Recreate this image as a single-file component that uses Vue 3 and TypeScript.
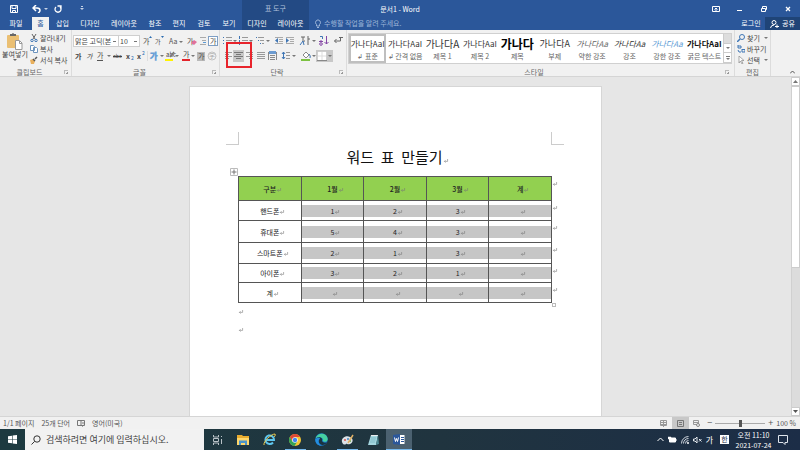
<script setup lang="ts">
import { ref } from 'vue'

interface Tool { id: string; w: number; label: string; active?: boolean }
interface Row { name: string; h: number; cells: string[] }

const tabs = [
  { t: '파일', w: 32 }, { t: '홈', w: 17, active: true }, { t: '삽입', w: 27 }, { t: '디자인', w: 28 },
  { t: '레이아웃', w: 40 }, { t: '참조', w: 22 }, { t: '편지', w: 26 }, { t: '검토', w: 24 }, { t: '보기', w: 26 },
]

const arrow = (x: number, y = 6) => `<path d="M${x} ${y}h4l-2 2z" fill="#777"/>`
const bars = (rows: [number, number][], y0 = 2) =>
  rows.map(([x, w], i) => `<path d="M${x} ${y0 + i * 2 + 0.5}h${w}" stroke="#999"/>`).join('')
const ga = (x: number, extra = '', y = 9, size = 8) =>
  `<text x="${x}" y="${y}" font-size="${size}" fill="#444" ${extra}>가</text>`

const icons: Record<string, string> = {
  grow: ga(3, '', 9, 7) + '<path d="M9 3l1.500-2L12 3z" fill="#2b6cb0"/>',
  shrink: ga(2, '', 9, 6) + '<path d="M8 1h3l-1.500 2z" fill="#2b6cb0"/>',
  aa: '<text x="4" y="9" font-size="7" fill="#555">Aa</text>' + arrow(14),
  clear: ga(2, '', 9, 7) + '<path d="M6 8l3-3 3 2-3 3z" fill="#e0719c"/>',
  phonetic: '<path d="M2 2.500h6M4 5.500h4M2 9.500h6" stroke="#aaa"/><path d="M5 7.500h3" stroke="#5b9bd5"/>',
  boxed: '<rect x="1.500" y="1.500" width="9" height="9" fill="#fff" stroke="#7f9fc4"/>' + ga(3, '', 9, 7),
  bold: ga(2, 'font-weight="bold"', 9, 7),
  italic: ga(2, 'font-style="italic"', 9, 7),
  underline: ga(2, '', 8, 7) + '<path d="M2 10.500h6" stroke="#555"/>' + arrow(12, 5),
  strike: '<text x="0" y="8" font-size="5" fill="#444">abc</text><path d="M0 6.500h9" stroke="#444"/>',
  sub: '<text x="1" y="9" font-size="7" font-weight="bold" fill="#444">x</text><text x="6" y="10" font-size="5" fill="#2b6cb0">2</text>',
  sup: '<text x="1" y="9" font-size="7" font-weight="bold" fill="#444">x</text><text x="6" y="5" font-size="5" fill="#2b6cb0">2</text>',
  effects: '<path d="M.500 1v10" stroke="#ddd"/><text x="3" y="9" font-size="8" fill="#fff" stroke="#6a9fd6" stroke-width="1">가</text>' + arrow(13, 5),
  highlight: '<text x="2" y="7" font-size="6" fill="#444">abc</text><path d="M6 7l4-5" stroke="#777" stroke-width="1.500"/><rect x="1" y="9" width="8" height="2" fill="#fff200"/>' + arrow(11, 5),
  color: ga(2, '', 7, 7) + '<rect x="1" y="9" width="8" height="2" fill="#e3242b"/>' + arrow(10, 5),
  shade: '<rect x="1" y="2" width="8" height="9" fill="#b9b9b9"/>' + ga(2, '', 9, 7),
  circle: '<circle cx="6" cy="6" r="4" fill="none" stroke="#c2c2c2"/><text x="3" y="8" font-size="6" fill="#aaa">字</text>',
  bullets: '<path d="M1 2.500h1M1 5.500h1M1 8.500h1" stroke="#3f76b5"/><path d="M4 2.500h6M4 5.500h6M4 8.500h6" stroke="#999"/>' + arrow(11, 5),
  numbers: '<path d="M1.500 1v3M1.500 5v2M1.500 8v2" stroke="#3f76b5"/><path d="M4 2.500h6M4 5.500h6M4 8.500h6" stroke="#999"/>' + arrow(11, 5),
  multi: '<path d="M1 2.500h1M3 5.500h1M5 8.500h1" stroke="#3f76b5"/><path d="M3 2.500h6M5 5.500h4M7 8.500h2" stroke="#999"/>' + arrow(11, 5),
  outdent: '<path d="M1 2.500h8M5 4.500h4M5 6.500h4M1 8.500h8" stroke="#aaa"/><path d="M4 3v5L1 5.500z" fill="#3f76b5"/>',
  indent: '<path d="M1 2.500h8M5 4.500h4M5 6.500h4M1 8.500h8" stroke="#aaa"/><path d="M1 3v5l3-2.500z" fill="#3f76b5"/>',
  direction: '<path d="M2 2h4M4 2v3M3 6h3M9 1v9M9 4h2" stroke="#666" fill="none"/><path d="M1 10l3-4 1 4" fill="none" stroke="#3f76b5"/>' + arrow(13, 5),
  sort: '<path d="M2 1.500h2.500V4" stroke="#3f76b5" fill="none"/><path d="M3 5v1M1 6.500h4" stroke="#8446a5"/><circle cx="3" cy="9" r="1.300" stroke="#8446a5" fill="none"/><path d="M8.500 1v8M6.500 7l2 2 2-2" stroke="#8446a5" fill="none"/>',
  marks: '<path d="M9.500 2v4h-6M5.500 4l-2 2 2 2M8 2.500h4" stroke="#666" fill="none"/>',
  left: bars([[3, 7], [3, 4], [3, 7], [3, 4]]),
  center: bars([[1, 9], [3, 5], [1, 9], [3, 5]]).replace(/#999/g, '#777'),
  right: bars([[2, 7], [5, 4], [2, 7], [5, 4]]),
  justify: bars([[2, 8], [2, 8], [2, 8], [2, 8]]),
  distribute: '<rect x="2" y="1" width="7" height="3" fill="#6c9bd0"/><path d="M1.500 2v8M9.500 2v8M3 5.500h5M3 7.500h5M3 9.500h5" stroke="#888"/>',
  spacing: '<path d="M3.500 2v7M2 4l1.500-2L5 4M2 7l1.500 2L5 7" stroke="#3f76b5" fill="none"/><path d="M6 2.500h4M6 5.500h4M6 8.500h4" stroke="#999"/>' + arrow(12, 5),
  fill: '<path d="M3 5l3-3 3 3-3 3z" fill="#fff" stroke="#888"/><path d="M9 4q2 2 1 4" stroke="#3f76b5" fill="none"/><rect x="1" y="9" width="9" height="2" fill="#7cc142"/>' + arrow(12, 5),
  borders: '<rect x="1.500" y="1.500" width="9" height="9" fill="#fff" stroke="#bbb" stroke-dasharray="1 1"/><path d="M6 2v8M2 6h8" stroke="#ddd"/><path d="M1 10.500h10" stroke="#888"/>' + arrow(12, 5),
}

const fontTop: Tool[] = [
  { id: 'grow', w: 13, label: '글꼴 크게' }, { id: 'shrink', w: 12, label: '글꼴 작게' }, { id: 'aa', w: 20, label: '대/소문자 바꾸기' },
  { id: 'clear', w: 13, label: '서식 지우기' }, { id: 'phonetic', w: 9, label: '윗주 달기' }, { id: 'boxed', w: 12, label: '문자 테두리' },
]
const fontBottom: Tool[] = [
  { id: 'bold', w: 11, label: '굵게' }, { id: 'italic', w: 11, label: '기울임꼴' }, { id: 'underline', w: 18, label: '밑줄' },
  { id: 'strike', w: 12, label: '취소선' }, { id: 'sub', w: 11, label: '아래 첨자' }, { id: 'sup', w: 11, label: '위 첨자' },
  { id: 'effects', w: 17, label: '텍스트 효과' }, { id: 'highlight', w: 17, label: '강조 색' }, { id: 'color', w: 15, label: '글꼴 색' },
  { id: 'shade', w: 10, label: '문자 음영' }, { id: 'circle', w: 12, label: '원 문자' },
]
const paraTop: Tool[] = [
  { id: 'bullets', w: 16, label: '글머리 기호' }, { id: 'numbers', w: 17, label: '번호 매기기' }, { id: 'multi', w: 19, label: '다단계 목록' },
  { id: 'outdent', w: 11, label: '내어쓰기' }, { id: 'indent', w: 14, label: '들여쓰기' }, { id: 'direction', w: 19, label: '텍스트 방향' },
  { id: 'sort', w: 13, label: '정렬' }, { id: 'marks', w: 14, label: '편집 기호' },
]
const paraBottom: Tool[] = [
  { id: 'left', w: 11, label: '왼쪽 맞춤' }, { id: 'center', w: 11, label: '가운데 맞춤', active: true }, { id: 'right', w: 11, label: '오른쪽 맞춤' },
  { id: 'justify', w: 12, label: '양쪽 맞춤' }, { id: 'distribute', w: 13, label: '균등 분할' }, { id: 'spacing', w: 20, label: '줄 간격' },
  { id: 'fill', w: 16, label: '음영' }, { id: 'borders', w: 17, label: '테두리', active: true },
]

const styles = [
  { s: '가나다AaI', n: '↲ 표준', c: 'selected' }, { s: '가나다AaI', n: '↲ 간격 없음', c: '' }, { s: '가나다A', n: '제목 1', c: 'large' },
  { s: '가나다AaI', n: '제목 2', c: '' }, { s: '가나다', n: '제목', c: 'title' }, { s: '가나다A', n: '부제', c: 'medium' },
  { s: '가나다Aa', n: '약한 강조', c: 'slant' }, { s: '가나다Aa', n: '강조', c: 'slant dark' }, { s: '가나다Aa', n: '강한 강조', c: 'slant blue' },
  { s: '가나다AaI', n: '굵은 텍스트', c: 'strong' },
]

const title = '워드  표  만들기'
const heads = ['구분', '1월', '2월', '3월', '계']
const rows: Row[] = [
  { name: '핸드폰', h: 20, cells: ['1', '2', '3', ''] },
  { name: '휴대폰', h: 22, cells: ['5', '4', '3', ''] },
  { name: '스마트폰', h: 21, cells: ['2', '1', '3', ''] },
  { name: '아이폰', h: 19, cells: ['3', '2', '1', ''] },
  { name: '계', h: 20, cells: ['', '', '', ''] },
]
const zoom = ref(50)
const font = ref('맑은 고딕(본')
const size = ref('10')
</script>

<template>
  <div class="app">
    <header>
      <div class="titlebar">
        <div class="left">
          <div class="quick">
            <button aria-label="저장"><svg width="8" height="8" viewBox="0 0 8 8"><path d="M.5.5h7v7h-7zM2 1v2.500h4V1M2.500 7.500v-2h3v2" fill="none" stroke="#fff" /></svg></button>
            <button aria-label="실행 취소"><svg width="16" height="8" viewBox="0 0 16 8"><path d="M4 0L1 3l3 3M1 3h4q3 0 3 2.500Q8 7 6 8" fill="none" stroke="#fff" stroke-width="1.500" /><path d="M12 3h4l-2 2z" fill="#c5d2e6" /></svg></button>
            <button aria-label="다시 실행"><svg width="8" height="8" viewBox="0 0 8 8"><path d="M2 2a3 3 0 1 0 4 0M3.500 1H7v3" fill="none" stroke="#fff" stroke-width="1.300" /></svg></button>
            <button class="more" aria-label="빠른 실행 사용자 지정"><svg width="4" height="5" viewBox="0 0 4 5"><path d="M1 .5h2" stroke="#c5d2e6" /><path d="M0 2h4L2 4z" fill="#c5d2e6" /></svg></button>
          </div>
          <div class="context">표 도구</div>
        </div>
        <div class="doc">문서1 - Word</div>
        <div class="window">
          <button aria-label="리본 표시 옵션"><svg width="8" height="8" viewBox="0 0 8 8"><path d="M.5 1.500h7v5h-7zM4 6V3M2.500 4.500L4 3l1.500 1.500" fill="none" stroke="#fff" /></svg></button>
          <button aria-label="최소화"><svg width="8" height="8" viewBox="0 0 8 8"><path d="M1 5.500h5" stroke="#fff" /></svg></button>
          <button aria-label="이전 크기로"><svg width="8" height="8" viewBox="0 0 8 8"><path d="M1.500 3.500h4v3h-4zM2.500 3V1.500h4v3H6" fill="none" stroke="#fff" /></svg></button>
          <button aria-label="닫기"><svg width="8" height="8" viewBox="0 0 8 8"><path d="M2 2l4 4M6 2L2 6" stroke="#fff" stroke-width="1.300" /></svg></button>
        </div>
      </div>
      <nav class="tabs">
        <a v-for="t in tabs" :key="t.t" href="#" :class="{ active: t.active }" :style="{ width: t.w + 'px' }">{{ t.t }}</a>
        <div class="contexttabs"><a href="#">디자인</a><a href="#">레이아웃</a></div>
        <label class="tell">
          <svg width="6" height="9" viewBox="0 0 6 9"><path d="M1.500 5.500a2.500 2.500 0 1 1 3 0V7h-3zM2 8.500h2" fill="none" stroke="#9db5d8" /></svg>
          <input type="text" placeholder="수행할 작업을 알려 주세요." aria-label="수행할 작업을 알려 주세요." />
        </label>
        <a class="login" href="#">로그인</a>
        <button class="share"><svg width="9" height="8" viewBox="0 0 9 8"><circle cx="4" cy="2.500" r="2" fill="none" stroke="#fff" /><path d="M.5 8Q1 5 4 5M5 6.500h4M7 4.500v4" fill="none" stroke="#fff" /></svg>공유</button>
      </nav>
    </header>

    <section class="ribbon">
      <div class="group clipboard">
        <div class="body">
          <button class="paste">
            <svg width="16" height="17" viewBox="0 0 16 17"><rect y="2" width="12" height="13" rx="1" fill="#eabf73" /><path d="M3 3V1h2q1-2 2 0h2v2z" fill="#666" /><path d="M8.500 7.500h4l2.500 2.500v6.500H8.500z" fill="#fff" stroke="#999" /><path d="M12.500 8v2.500H15" fill="none" stroke="#999" /></svg>
            <span>붙여넣기</span>
            <svg width="4" height="2" viewBox="0 0 4 2"><path d="M0 0h4L2 2z" fill="#666" /></svg>
          </button>
          <div class="commands">
            <button><svg width="8" height="8" viewBox="0 0 8 8"><path d="M2 0l3 5M6 0L3 5" stroke="#666" /><circle cx="2" cy="6.500" r="1.200" fill="none" stroke="#3f76b5" /><circle cx="6" cy="6.500" r="1.200" fill="none" stroke="#3f76b5" /></svg>잘라내기</button>
            <button><svg width="8" height="8" viewBox="0 0 8 8"><path d="M.5.5h3l1 1v4h-4zM3.500 2.500h3l1 1v4h-4z" fill="#fff" stroke="#6c93bd" /></svg>복사</button>
            <button><svg width="8" height="8" viewBox="0 0 8 8"><path d="M0 4l3-1 2 2-1 3H1z" fill="#e9b05c" /><path d="M3 3l2 2M5 3l2-2" stroke="#555" stroke-width="1.500" /></svg>서식 복사</button>
          </div>
        </div>
        <div class="caption">클립보드<i class="launch"></i></div>
      </div>

      <div class="group font">
        <div class="body rows">
          <div class="row">
            <select v-model="font" class="face" aria-label="글꼴"><option>맑은 고딕(본</option></select>
            <select v-model="size" class="size" aria-label="글꼴 크기"><option>10</option></select>
            <button v-for="t in fontTop" :key="t.id" :aria-label="t.label"><svg :width="t.w" height="12" v-html="icons[t.id]"></svg></button>
          </div>
          <div class="row">
            <button v-for="t in fontBottom" :key="t.id" :aria-label="t.label"><svg :width="t.w" height="12" v-html="icons[t.id]"></svg></button>
          </div>
        </div>
        <div class="caption">글꼴<i class="launch"></i></div>
      </div>

      <div class="group para">
        <div class="body rows">
          <div class="row">
            <button v-for="t in paraTop" :key="t.id" :aria-label="t.label"><svg :width="t.w" height="12" v-html="icons[t.id]"></svg></button>
          </div>
          <div class="row">
            <button v-for="t in paraBottom" :key="t.id" :class="{ on: t.active }" :aria-label="t.label"><svg :width="t.w" height="12" v-html="icons[t.id]"></svg></button>
          </div>
        </div>
        <div class="caption">단락<i class="launch"></i></div>
        <div class="callout"></div>
      </div>

      <div class="group styles">
        <div class="body">
          <div class="gallery">
            <button v-for="s in styles" :key="s.n" :class="s.c"><span class="sample">{{ s.s }}</span><span class="name">{{ s.n }}</span></button>
            <div class="spin"><button aria-label="위로"></button><button aria-label="아래로"><svg width="4" height="2"><path d="M0 0h4L2 2z" fill="#777" /></svg></button><button aria-label="자세히"><svg width="4" height="4"><path d="M0 0h4v1H0zM0 2h4L2 4z" fill="#777" /></svg></button></div>
          </div>
        </div>
        <div class="caption">스타일<i class="launch"></i></div>
      </div>

      <div class="group edit">
        <div class="body commands">
          <button><svg width="8" height="8" viewBox="0 0 8 8"><circle cx="5" cy="3" r="2.500" fill="none" stroke="#3f76b5" /><path d="M3 5L0 8" stroke="#3f76b5" stroke-width="1.500" /></svg>찾기<svg class="drop" width="4" height="2"><path d="M0 0h4L2 2z" fill="#777" /></svg></button>
          <button><svg width="8" height="8" viewBox="0 0 8 8"><path d="M1 0v3h3V1H1M5 4v3h3V4.500H5M1 5l1 2h2" fill="none" stroke="#3f76b5" /></svg>바꾸기</button>
          <button><svg width="8" height="8" viewBox="0 0 8 8"><path d="M2 0v7l1.500-2 1.500 3 1-.5-1.500-3H7z" fill="#fff" stroke="#888" stroke-width=".7" /></svg>선택<svg class="drop" width="4" height="2"><path d="M0 0h4L2 2z" fill="#777" /></svg></button>
        </div>
        <div class="caption">편집</div>
      </div>
      <button class="collapse" aria-label="리본 축소"><svg width="5" height="4" viewBox="0 0 5 4"><path d="M0 3.500L2.500 1 5 3.500" fill="none" stroke="#555" /></svg></button>
    </section>

    <main>
      <article class="page">
        <div class="corners"><i></i><i class="r"></i></div>
        <h1>{{ title }}<svg class="mark" viewBox="0 0 5 5"><path d="M4.500 0v3H.5M2 1.500L.5 3 2 4.500" /></svg></h1>
        <div class="sheet">
          <svg class="move" width="8" height="8" viewBox="0 0 8 8"><path d="M.5.5h7v7h-7z" fill="#fff" stroke="#bbb" /><path d="M4 1.500v5M1.500 4h5" stroke="#777" /></svg>
          <table>
            <thead>
              <tr>
                <th v-for="(h, i) in heads" :key="h" scope="col">{{ h }}<svg class="mark" viewBox="0 0 5 5"><path d="M4.500 0v3H.5M2 1.500L.5 3 2 4.500" /></svg><svg v-if="i === 4" class="mark end" viewBox="0 0 5 5"><path d="M4.500 0v3H.5M2 1.500L.5 3 2 4.500" /></svg></th>
              </tr>
            </thead>
            <tbody>
              <tr v-for="r in rows" :key="r.name" :style="{ height: r.h + 'px' }">
                <td class="rowname">{{ r.name }}<svg class="mark" viewBox="0 0 5 5"><path d="M4.500 0v3H.5M2 1.500L.5 3 2 4.500" /></svg></td>
                <td v-for="(c, i) in r.cells" :key="i">
                  <div class="picked">{{ c }}<svg class="mark" viewBox="0 0 5 5"><path d="M4.500 0v3H.5M2 1.500L.5 3 2 4.500" /></svg></div>
                  <svg v-if="i === 3" class="mark end" viewBox="0 0 5 5"><path d="M4.500 0v3H.5M2 1.500L.5 3 2 4.500" /></svg>
                </td>
              </tr>
            </tbody>
          </table>
          <i class="resize"></i>
        </div>
        <p v-for="n in 2" :key="n"><svg class="mark" viewBox="0 0 5 5"><path d="M4.500 0v3H.5M2 1.500L.5 3 2 4.500" /></svg></p>
      </article>
      <div class="scroll">
        <button aria-label="위로 스크롤"><svg width="5" height="3"><path d="M0 3h5L2.500 0z" fill="#777" /></svg></button>
        <div class="thumb"></div>
        <button aria-label="아래로 스크롤"><svg width="5" height="3"><path d="M0 0h5L2.500 3z" fill="#555" /></svg></button>
      </div>
    </main>

    <footer class="status">
      <span>1/1 페이지</span><span>25개 단어</span>
      <svg width="8" height="7" viewBox="0 0 8 7"><path d="M.5.5h7v5h-7zM4 1v5M5 3h2M5 6.500L7 5" fill="none" stroke="#777" /></svg>
      <span>영어(미국)</span>
      <div class="views">
        <button aria-label="읽기 모드"><svg width="7" height="7" viewBox="0 0 7 7"><path d="M.5.5h6v5h-6zM3.500 1v6M1 2.500h5M1 4.500h5" fill="none" stroke="#999" /></svg></button>
        <button class="on" aria-label="인쇄 모양"><svg width="7" height="7" viewBox="0 0 7 7"><path d="M.5.5h6v6h-6zM2 2.500h3M2 4.500h3" fill="none" stroke="#777" /></svg></button>
        <button aria-label="웹 모양"><svg width="7" height="7" viewBox="0 0 7 7"><path d="M.5.5h5v4h-5zM1 2.500h4" fill="none" stroke="#999" /><circle cx="5" cy="5" r="1.500" fill="#f1f1f1" stroke="#888" /></svg></button>
      </div>
      <button class="step" aria-label="축소">−</button>
      <input v-model="zoom" type="range" min="0" max="100" aria-label="확대/축소" />
      <button class="step" aria-label="확대">+</button>
      <span class="percent">100 %</span>
    </footer>

    <div class="taskbar">
      <button class="start" aria-label="시작"><svg width="9" height="9" viewBox="0 0 9 9"><path d="M0 1.300L4 .7v3.600H0zM4.600.6L9 0v4.300H4.600zM0 4.800h4v3.500L0 7.700zM4.600 4.800H9V9l-4.400-.6z" fill="#fff" /></svg></button>
      <label class="search"><svg width="10" height="10" viewBox="0 0 10 10"><circle cx="6" cy="4" r="3.200" fill="none" stroke="#333" /><path d="M3.600 6.400L.5 9.500" stroke="#333" /></svg><input type="text" placeholder="검색하려면 여기에 입력하십시오." aria-label="검색" /></label>
      <div class="apps">
        <button aria-label="작업 보기"><svg width="11" height="10" viewBox="0 0 11 10"><path d="M1.500 3.500h5v3h-5zM1.500 0v2h5V0M1.500 10V8h5v2M9.500 1v1M9.500 4v5" fill="none" stroke="#b9c2c7" /></svg></button>
        <button aria-label="파일 탐색기"><svg width="12" height="10" viewBox="0 0 12 10"><path d="M0 0h5l1 1h6v9H0z" fill="#e8ac2f" /><path d="M0 3h12v7H0z" fill="#ffd76a" /><path d="M2 10V5.500h8V10H8V8H4v2z" fill="#4b94c9" /></svg></button>
        <button aria-label="Internet Explorer"><svg width="13" height="13" viewBox="0 0 13 13"><path d="M3 7h8A4.300 4.300 0 1 0 10 9.500" fill="none" stroke="#5fc6ee" stroke-width="2" /><path d="M1 12C0 9 8 1 12 1q1 1-1 3" fill="none" stroke="#f2cd4b" /></svg></button>
        <button class="run" aria-label="Chrome"><svg width="12" height="12" viewBox="0 0 12 12"><circle cx="6" cy="6" r="6" fill="#f4c534" /><path d="M.8 3A6 6 0 0 1 11.200 3H6L3.400 7.500z" fill="#df4937" /><path d="M.8 3a6 6 0 0 0 4.700 9l2.800-4.500H3.400z" fill="#35a357" /><circle cx="6" cy="6" r="2.800" fill="#fff" /><circle cx="6" cy="6" r="2.200" fill="#4285f4" /></svg></button>
        <button aria-label="Edge"><svg width="13" height="13" viewBox="0 0 13 13"><circle cx="6.500" cy="6.500" r="6.200" fill="#1679cf" /><path d="M.6 5.500C2-1 12-1 12.700 6c0 3-4 3.500-5 2 1.500-3-3-5-7.100-2.500z" fill="#46cfa0" /><path d="M.6 5.500C5 3 8 5 7 8c1 2 4 2 5 1-1 3-5 4-7 2S3 7 5 5.500z" fill="#1a3340" /><path d="M.4 6C3 4 5 5 5 5.500 2 8 4 12 7 12.700 3 13-.2 10 .4 6z" fill="#248ee0" /></svg></button>
        <button class="run" aria-label="그림판"><svg width="13" height="12" viewBox="0 0 13 12"><path d="M1 8C0 4 5 1 9 3s3 6 0 7-3-1-4 0-3 1-4-2z" fill="#dce2e6" /><circle cx="4" cy="6" r="1" fill="#d9534f" /><circle cx="7" cy="5" r="1" fill="#3f85c6" /><circle cx="9" cy="7" r="1" fill="#58a84a" /><path d="M7 9l5-8" stroke="#dfb166" stroke-width="1.500" /></svg></button>
        <button aria-label="메모장"><svg width="12" height="12" viewBox="0 0 12 12"><path d="M4 1h7l-2 10H1z" fill="#a4d6df" /><path d="M4 1h7v1H4z" fill="#e9eef0" /><path d="M9 11l2-10 1 9z" fill="#4c8994" /><path d="M4 4h5M3.500 6h5M3 8h5" stroke="#70afbc" stroke-width=".7" /></svg></button>
        <button class="run on" aria-label="Word"><svg width="12" height="11" viewBox="0 0 12 11"><path d="M6 1h5.500v9H6z" fill="#fff" /><path d="M8 3.500h3M8 5.500h3M8 7.500h3" stroke="#2b579a" /><path d="M0 1l7-1v11l-7-1z" fill="#2b579a" /><path d="M1.500 3.500l1 4 1-3 1 3 1-4" fill="none" stroke="#fff" /></svg></button>
      </div>
      <div class="tray">
        <svg width="7" height="5" viewBox="0 0 7 5"><path d="M.5 4l3-3 3 3" fill="none" stroke="#fff" /></svg>
        <svg width="9" height="7" viewBox="0 0 9 7"><path d="M1.500 2h6v4h-6z" fill="#fff" stroke="#fff" /><path d="M0 1h3v2H0zM8.500 3v2" fill="#fff" stroke="#fff" stroke-width=".5" /></svg>
        <svg width="8" height="8" viewBox="0 0 8 8"><path d="M.5 7.500A7 7 0 0 1 7.500.5M2.500 7.500a5 5 0 0 1 5-5M4.500 7.500a3 3 0 0 1 3-3" fill="none" stroke="#cfd5dd" /><circle cx="7" cy="7" r="1" fill="#fff" /></svg>
        <svg width="9" height="8" viewBox="0 0 9 8"><path d="M.5 3v2h1.500l2 2V1L2 3zM6 3l2.500 2.500M8.500 3L6 5.500" fill="none" stroke="#e5e9ee" /></svg>
        <span>가</span>
        <span class="ime">한</span>
      </div>
      <div class="clock"><span>오전 11:10</span><span>2021-07-24</span></div>
      <button class="notice" aria-label="알림"><svg width="10" height="10" viewBox="0 0 10 10"><path d="M.5.5h9v7H7v2L5 7.500H.5z" fill="none" stroke="#dfe5ec" /></svg></button>
    </div>
  </div>
</template>

<style>
body { margin: 0; }
</style>

<style scoped>
.app { display: flex; flex-direction: column; height: 100vh; overflow: hidden; background: #e6e6e6; color: #444; font: 7px/10px "Noto Sans CJK KR", "Noto Sans", sans-serif; }
.app * { box-sizing: border-box; }
button { margin: 0; padding: 0; border: 0; background: none; color: inherit; font: inherit; display: flex; align-items: center; justify-content: center; flex: none; white-space: nowrap; }
a { color: inherit; text-decoration: none; white-space: nowrap; }
input { min-width: 0; padding: 0; border: 0; outline: 0; background: none; font: inherit; }
svg { display: block; flex: none; }

header { background: #2b579a; color: #fff; }
.titlebar { display: grid; grid-template-columns: 1fr auto 1fr; height: 17px; align-items: center; }
.left { display: flex; align-self: stretch; }
.quick { display: flex; align-items: center; gap: 15px; width: 242px; padding-left: 10px; }
.quick button:nth-child(2) { margin: 0 -9px 0 -1px; }
.quick .more { margin-left: 3px; }
.context { width: 67px; background: #234a84; color: #b3c3dc; text-align: center; line-height: 17px; }
.window { display: flex; justify-content: flex-end; gap: 16px; padding-right: 8px; }
.tabs { display: flex; height: 13px; line-height: 13px; }
.tabs a { text-align: center; flex: none; }
.tabs .active { background: #f1f1f1; color: #2b579a; }
.contexttabs { display: flex; width: 67px; background: #234a84; }
.contexttabs a { width: 30px; }
.contexttabs a + a { width: 37px; }
.tell { display: flex; flex: 1; align-items: center; gap: 3px; padding-left: 6px; }
.tell input { flex: 1; height: 13px; }
.tell input::placeholder { color: #9db5d8; opacity: 1; }
.tabs .login { width: 28px; }
.share { width: 35px; gap: 3px; background: #1f4477; }

.ribbon { display: flex; height: 47px; background: #f1f1f1; border-bottom: 1px solid #d5d5d5; }
.group { position: relative; display: flex; flex-direction: column; border-right: 1px solid #dcdcdc; padding-top: 2px; flex: none; }
.body { flex: 1; display: flex; }
.caption { position: relative; height: 9px; padding-right: 12px; line-height: 10px; text-align: center; color: #666; }
.launch { position: absolute; right: 3px; top: 3px; width: 4px; height: 4px; border-left: 1px solid #bbb; border-top: 1px solid #bbb; background: linear-gradient(135deg, transparent 60%, #999 60%); }
.clipboard { width: 72px; }
.paste { flex-direction: column; align-self: flex-start; width: 30px; padding-top: 1px; }
.paste span { line-height: 9px; }
.commands { display: flex; flex-direction: column; justify-content: flex-start; }
.commands button { height: 11px; gap: 2px; justify-content: flex-start; }
.commands .drop { margin-left: 2px; }
.font { width: 148px; }
.rows { flex-direction: column; gap: 3px; padding: 3px 0 0 1px; }
.row { display: flex; height: 12px; }
select { appearance: none; height: 12px; padding: 0 6px 0 1px; border: 1px solid #cfcfcf; border-radius: 0; color: #444; font: 7px/10px "Noto Sans CJK KR", sans-serif; background: #fff linear-gradient(#777, #777) no-repeat right 2px center / 3px 1px; }
.face { width: 46px; }
.size { width: 21px; border-left: 0; }
.para { width: 127px; }
.para .rows { padding-left: 2px; }
.on { background: #c8c8c8; }
.callout { position: absolute; left: 6px; top: 12px; width: 26px; height: 26px; border: 2px solid #e8242c; pointer-events: none; }
.styles { flex: 1; min-width: 0; padding-left: 1px; padding-right: 2px; }
.gallery { display: flex; flex: 1; height: 31px; margin-top: 1px; background: #fff; border: 1px solid #d0d0d0; }
.gallery > button { position: relative; flex: 1 1 0; min-width: 0; flex-direction: column; justify-content: flex-start; }
.gallery .selected { box-shadow: inset 0 0 0 2px #bfbfbf; }
.sample { height: 17px; line-height: 19px; font-size: 8px; color: #333; }
.name { line-height: 10px; color: #666; }
.large .sample { font-size: 10px; }
.medium .sample { font-size: 9px; }
.title .sample { font-size: 12px; font-weight: 700; color: #000; }
.slant .sample { font-style: italic; color: #666; }
.dark .sample { color: #333; }
.blue .sample { color: #5b9bd5; }
.strong .sample { font-weight: 700; color: #111; }
.spin { display: flex; flex-direction: column; width: 8px; }
.spin button { flex: 1; border-left: 1px solid #ccc; border-bottom: 1px solid #ccc; }
.spin button:first-child { background: #ddd; }
.edit { width: 36px; }
.edit .commands { padding-left: 2px; }
.edit .caption { padding-right: 0; }
.collapse { width: 29px; align-items: flex-end; justify-content: flex-end; padding: 0 5px 2px 0; }

main { display: flex; flex: 1; min-height: 0; }
.page { width: 413px; margin: 9px auto 0; background: #fff; border: 1px solid #d6d6d6; border-bottom: 0; padding: 45px 49px 0 48px; flex: none; }
.corners { display: flex; justify-content: space-between; margin: 0 -12px; }
.corners i { width: 13px; height: 13px; border: solid #ccc; border-width: 0 1px 1px 0; }
.corners .r { border-width: 0 0 1px 1px; }
h1 { display: flex; align-items: flex-end; justify-content: center; margin: 0; padding: 1px 0 0 4px; font: 15px/22px "Noto Sans CJK KR", sans-serif; color: #111; white-space: pre; }
.mark { display: inline-block; width: 4px; height: 4px; margin-left: 1px; fill: none; stroke: #777; stroke-width: .7; overflow: visible; }
h1 .mark { margin-bottom: 5px; }
.sheet { position: relative; margin-top: 8px; }
.move { position: absolute; left: -8px; top: -8px; }
.resize { position: absolute; right: -4px; bottom: -4px; width: 4px; height: 4px; border: 1px solid #bbb; background: #fff; }
table { width: 100%; border-collapse: collapse; table-layout: fixed; color: #222; }
th, td { position: relative; padding: 0; border: 1px solid #555; text-align: center; font-weight: 400; line-height: 10px; }
th { height: 24px; padding-left: 5px; background: #92d050; font-weight: 500; }
.rowname { padding-left: 5px; }
.picked { height: 12px; padding-left: 5px; line-height: 12px; background: #c6c6c6; }
.end { position: absolute; right: -6px; top: 5px; }
p { height: 18px; margin: 0; padding-top: 4px; line-height: 8px; }
.scroll { display: flex; flex-direction: column; width: 9px; background: #dcdcdc; border-left: 1px solid #d0d0d0; }
.scroll button { height: 9px; background: #fff; border: 1px solid #ccc; border-left: 0; }
.thumb { flex: 0 1 182px; background: #fff; border: 1px solid #ccc; border-left: 0; margin-bottom: auto; }

.status { display: flex; align-items: center; height: 13px; gap: 7px; padding: 0 4px 0 3px; background: #f1f1f1; border-top: 1px solid #d5d5d5; color: #555; white-space: nowrap; flex: none; }
.views { display: flex; margin-left: auto; }
.views button { width: 17px; height: 12px; }
.views button:last-child { width: 15px; }
.step { width: 7px; font-size: 9px; margin: 0 -5px; }
input[type=range] { appearance: none; width: 50px; height: 9px; margin: 0; background: linear-gradient(#aaa, #aaa) no-repeat center / 100% 1px; }
input[type=range]::-webkit-slider-thumb { appearance: none; width: 3px; height: 7px; background: #555; }

.taskbar { display: flex; height: 21px; flex: none; background: linear-gradient(90deg, #1d3a40, #20343f 55%, #1c2d47); color: #fff; }
.start { width: 25px; }
.search { display: flex; align-items: center; gap: 5px; width: 179px; padding-left: 6px; background: #f2f2f2; font-size: 9px; }
.search input { flex: 1; height: 19px; }
.search input::placeholder { color: #444; opacity: 1; }
.apps { display: flex; }
.apps button { width: 26px; }
.apps .run { background: linear-gradient(#76b9ed, #76b9ed) no-repeat center bottom / 21px 1px; }
.apps .on { background: linear-gradient(#76b9ed, #76b9ed) no-repeat center bottom / 100% 1px, #4b6170; }
.tray { display: flex; align-items: center; gap: 4px; margin-left: auto; font-size: 8px; }
.ime { width: 9px; height: 9px; margin-left: 3px; background: #fff; color: #1c2d47; font-size: 7px; line-height: 9px; text-align: center; }
.clock { display: flex; flex-direction: column; justify-content: center; width: 49px; text-align: center; line-height: 10px; }
.notice { width: 10px; margin: 0 12px 0 0; }
</style>
